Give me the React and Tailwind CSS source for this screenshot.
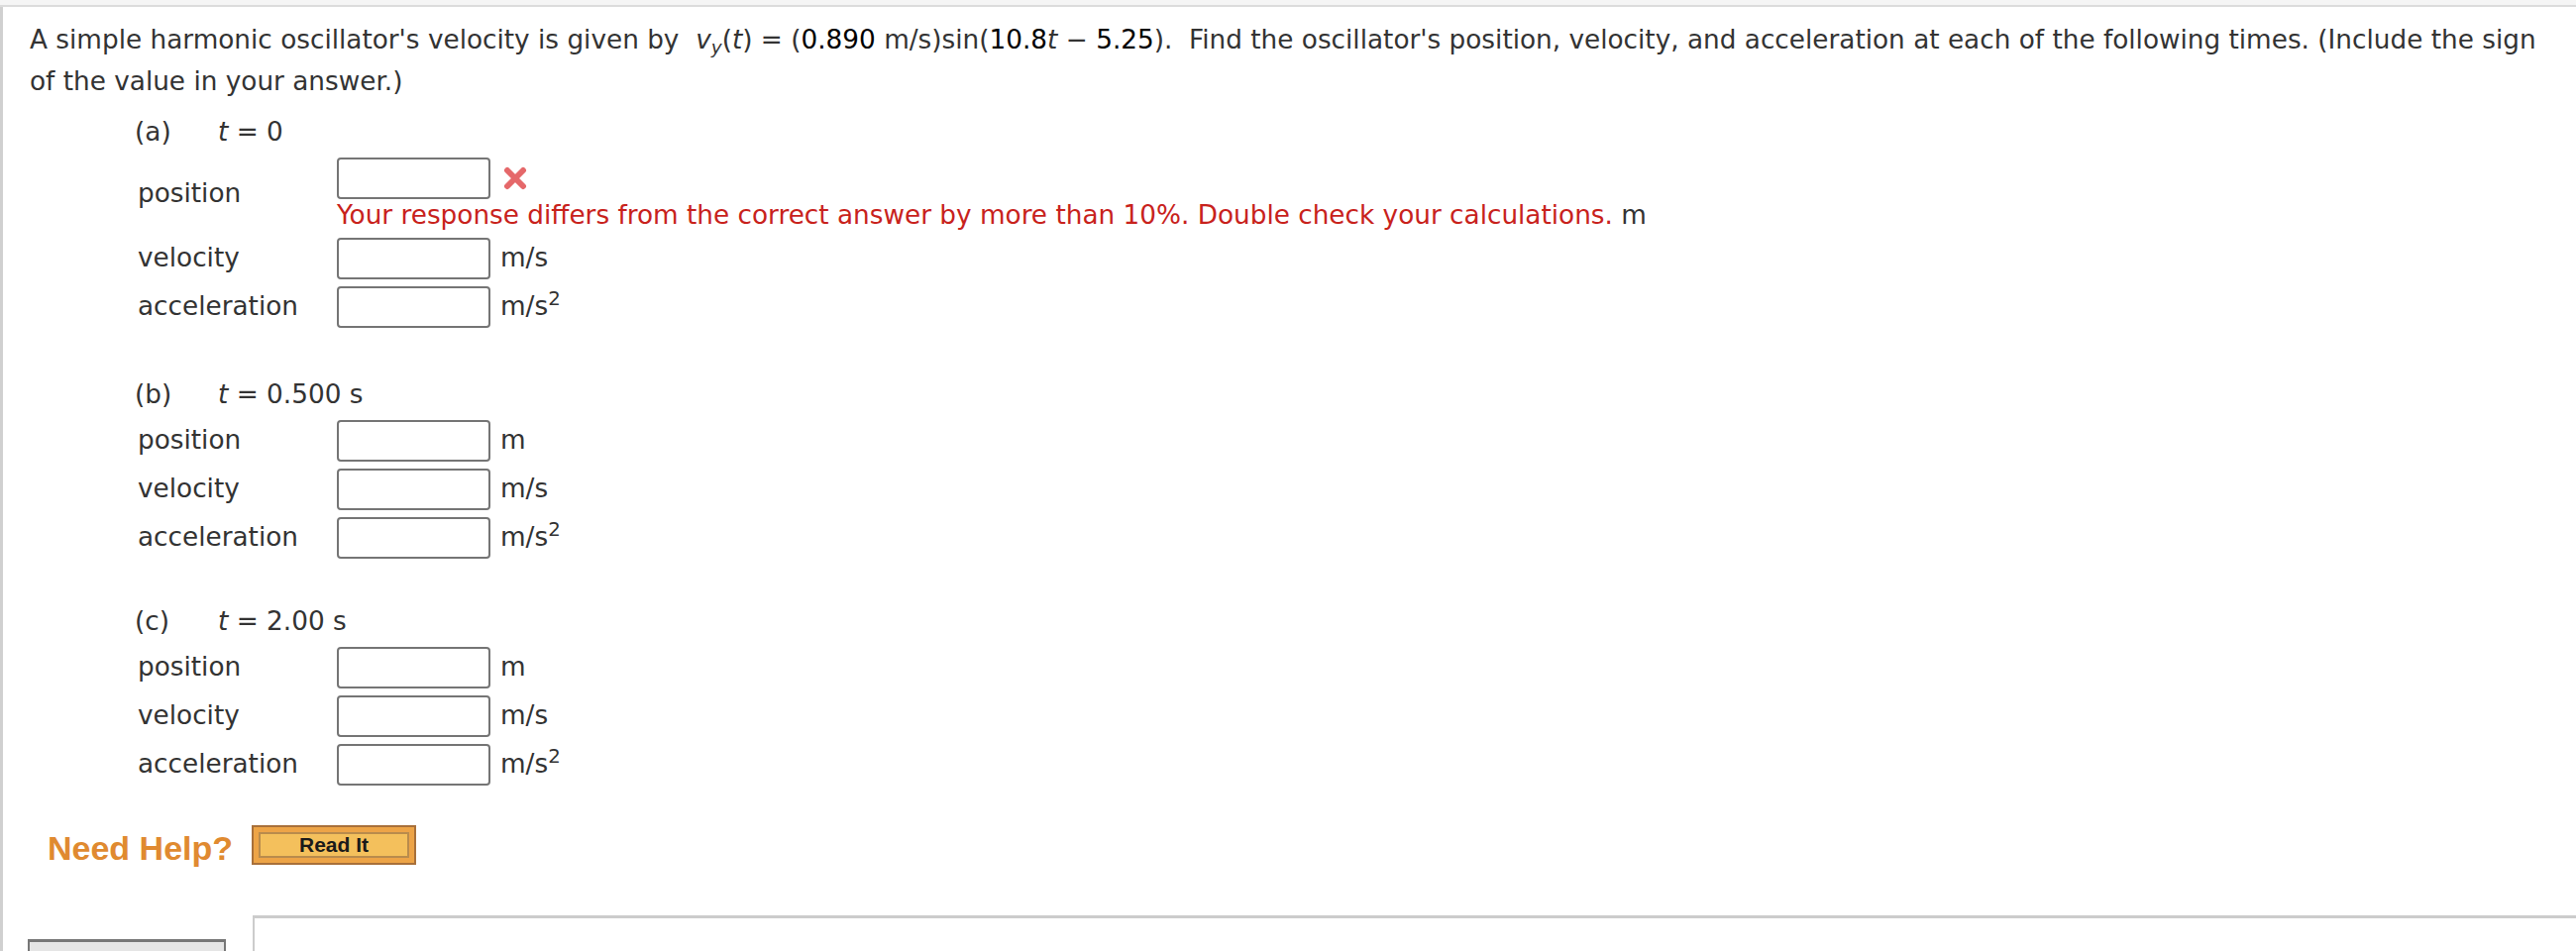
const Field = () => (
  <div className="h-[42px] w-[155px] rounded-[4px] border-2 border-[#757575] bg-white" />
);

const Unit = ({ sq, children }) => (
  <span className="ml-[10px] text-[#333]">
    {children}
    {sq && <sup className="text-[0.75em]">2</sup>}
  </span>
);

const WrongMark = () => (
  <svg width="26" height="26" viewBox="0 0 26 26" className="ml-[12px]">
    <path d="M5 5 L21 21 M21 5 L5 21" stroke="#e5686a" strokeWidth="6" strokeLinecap="round" />
  </svg>
);

const Row = ({ label, unit, sq }) => (
  <>
    <div className="pl-[3px] text-[#333]">{label}</div>
    <div className="flex items-center">
      <Field />
      <Unit sq={sq}>{unit}</Unit>
    </div>
  </>
);

const Part = ({ letter, time, withError }) => (
  <div className="ml-[133px]">
    <div className="flex h-[30px] items-center text-[#333]">
      <span className="w-[84px]">({letter})</span>
      <span>
        <i>t</i> = {time}
      </span>
    </div>
    <div className="mt-[10px] grid grid-cols-[204px_auto] items-center gap-y-[7px]">
      {withError ? (
        <>
          <div className="pl-[3px] text-[#333]">position</div>
          <div>
            <div className="flex h-[42px] items-center">
              <Field />
              <WrongMark />
            </div>
            <div className="leading-[32px]">
              <span className="text-[#c8221c]">
                Your response differs from the correct answer by more than 10%. Double check your calculations.
              </span>
              <span className="text-[#333]"> m</span>
            </div>
          </div>
        </>
      ) : (
        <Row label="position" unit="m" />
      )}
      <Row label="velocity" unit="m/s" />
      <Row label="acceleration" unit="m/s" sq />
    </div>
  </div>
);

const App = () => {
  return (
    <div className="h-[960px] w-[2600px] overflow-hidden bg-white" style={{ fontFamily: '"DejaVu Sans", Verdana, sans-serif' }}>
      <div className="h-[7px] border-b-2 border-[#dcdcdc] bg-[#f5f5f5]" />
      <div className="h-full border-l-[3px] border-[#d0d0d0] text-[26.3px]">
        <p className="pl-[27px] pr-[30px] pt-[12px] leading-[42px] text-[#333]">
          A simple harmonic oscillator's velocity is given by&nbsp;&nbsp;
          <i>v</i>
          <sub className="text-[0.7em]">
            <i>y</i>
          </sub>
          (<i>t</i>) = (<span className="text-black">0.890</span> m/s)sin(<span className="text-black">10.8</span>
          <i>t</i> − <span className="text-black">5.25</span>).&nbsp;&nbsp;Find the oscillator's position, velocity, and
          acceleration at each of the following times. (Include the sign of the value in your answer.)
        </p>

        <div className="mt-[16px]">
          <Part letter="a" time="0" withError />
        </div>
        <div className="mt-[53px]">
          <Part letter="b" time="0.500 s" />
        </div>
        <div className="mt-[49px]">
          <Part letter="c" time="2.00 s" />
        </div>

        <div className="mt-[40px] flex items-start pl-[45px]">
          <span
            className="mt-[3px] w-[206px] text-[34px] leading-[40px] font-bold text-[#e08a30]"
            style={{ fontFamily: '"Liberation Sans", Arial, sans-serif' }}
          >
            Need Help?
          </span>
          <button className="flex h-[40px] w-[166px] items-center justify-center border-2 border-[#a8703a] bg-[#eda447] p-[5px]">
            <span
              className="flex h-full w-full items-center justify-center border-2 border-[#b98b4c] bg-[#f4c05c] text-[21px] font-bold text-[#1a1a1a]"
              style={{ fontFamily: '"Liberation Sans", Arial, sans-serif' }}
            >
              Read It
            </span>
          </button>
        </div>

        <div className="mt-[48px] flex">
          <div className="ml-[25px] mt-[24px] h-[60px] w-[200px] border-x-2 border-t-[3px] border-[#777] bg-[#e5e5e5]" />
          <div className="ml-[27px] h-[100px] flex-1 border-l-2 border-t-[3px] border-[#cccccc]" />
        </div>
      </div>
    </div>
  );
};

export default App;
